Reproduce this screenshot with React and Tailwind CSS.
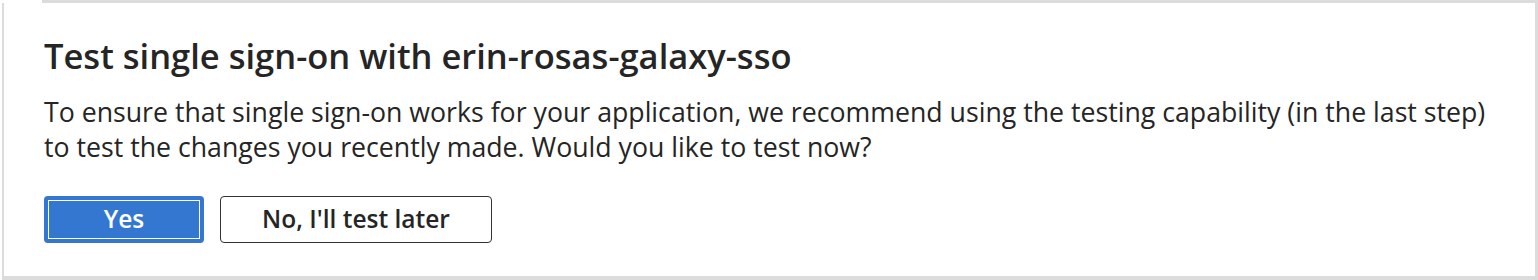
import React from "react";

export default function App() {
  return (
    <div className="w-[1538px] h-[280px] bg-white flex flex-col text-[#252525]" style={{ fontFamily: '"Open Sans", "Noto Sans", sans-serif' }}>
      {/* top edge of the panel behind */}
      <div className="flex h-[3px] shrink-0">
        <div className="w-[42px] bg-white" />
        <div className="flex-1 bg-[#dcdcdc]" />
      </div>

      {/* dialog card */}
      <div className="ml-[2px] flex-1 border-l-2 border-r-[3px] border-b-4 border-[#dcdcdc] bg-white px-[40px] pt-[31px]">
        <h1 className="text-[34.5px] leading-[44px] font-semibold">
          Test single sign-on with erin-rosas-galaxy-sso
        </h1>
        <p className="mt-[16px] text-[26.7px] leading-[35px]">
          To ensure that single sign-on works for your application, we recommend using the testing capability (in the last step) to test the changes you recently made. Would you like to test now?
        </p>

        <div className="mt-[32px] flex gap-4">
          <button className="w-[160px] h-[47px] rounded-[4px] bg-[#3377d1] p-[4px]">
            <span className="flex h-full w-full items-center justify-center border border-white text-white text-[24.5px] font-semibold">
              Yes
            </span>
          </button>
          <button className="w-[272px] h-[47px] rounded-[4px] border-[1.5px] border-[#333] bg-white text-[24.5px] font-semibold text-[#252525]">
            No, I'll test later
          </button>
        </div>
      </div>
    </div>
  );
}
